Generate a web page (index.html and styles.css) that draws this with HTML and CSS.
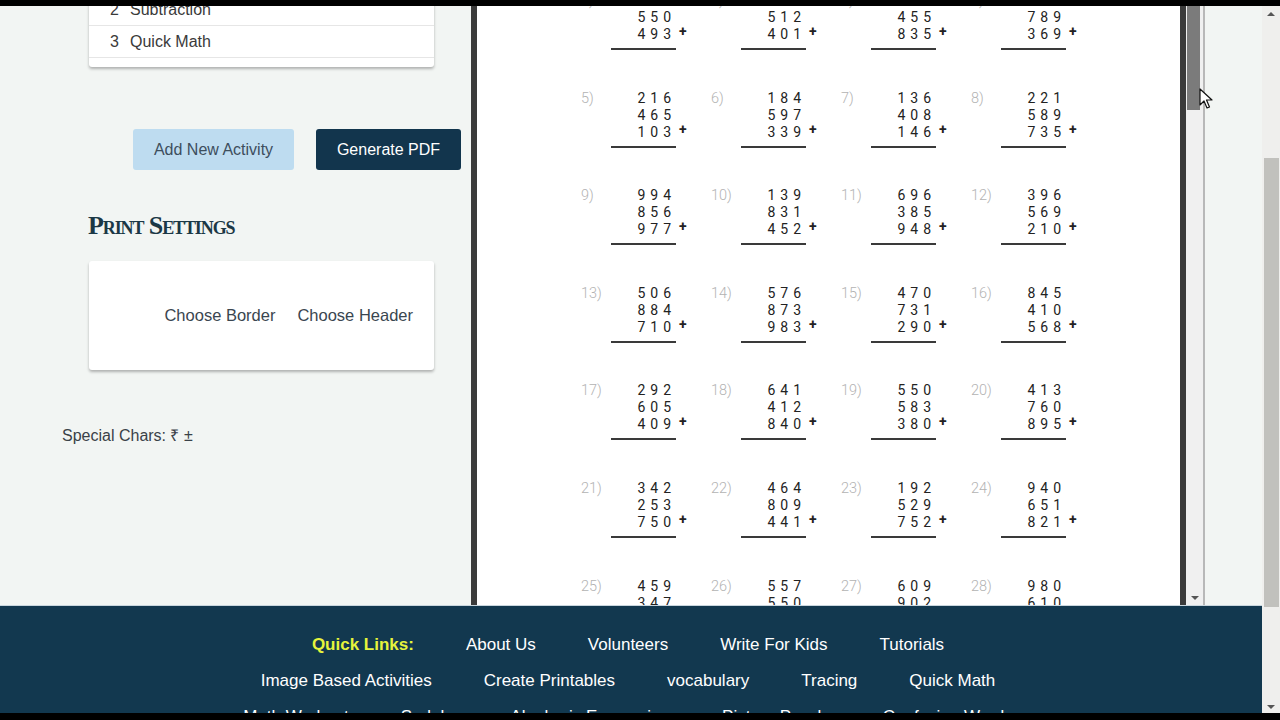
FILE: index.html
```html
<!DOCTYPE html>
<html lang="en">

<head>
    <meta charset="UTF-8">
    <meta name="viewport" content="width=device-width, initial-scale=1.0">
    <title>Worksheet Maker</title>
    <link rel="stylesheet" href="styles.css">
</head>

<body>
    <div class="screen">
        <div class="bar"></div>

        <div class="viewport">
            <div class="page">
                <div class="main">
                    <aside class="sidebar">
                        <ul class="activity-list">
                            <li><span class="num">1</span>Addition</li>
                            <li><span class="num">2</span>Subtraction</li>
                            <li><span class="num">3</span>Quick Math</li>
                        </ul>

                        <div class="actions">
                            <button class="btn btn-light">Add New Activity</button>
                            <button class="btn btn-dark">Generate PDF</button>
                        </div>

                        <h2 class="section-title">Print Settings</h2>
                        <div class="settings-card">
                            <a href="#">Choose Border</a>
                            <a href="#">Choose Header</a>
                        </div>

                        <p class="special">Special Chars: ₹ ±</p>
                    </aside>

                    <section class="preview">
                        <div class="frame">
                            <div class="sheet" id="sheet"></div>
                        </div>
                        <div class="frame-scroll">
                            <div class="frame-thumb"></div>
                            <span class="arrow-down"></span>
                        </div>
                    </section>
                </div>

                <footer class="footer">
                    <div class="links">
                        <span class="links-title">Quick Links:</span>
                        <a href="#">About Us</a>
                        <a href="#">Volunteers</a>
                        <a href="#">Write For Kids</a>
                        <a href="#">Tutorials</a>
                    </div>
                    <div class="links">
                        <a href="#">Image Based Activities</a>
                        <a href="#">Create Printables</a>
                        <a href="#">vocabulary</a>
                        <a href="#">Tracing</a>
                        <a href="#">Quick Math</a>
                    </div>
                    <div class="links">
                        <a href="#">Math Workout</a>
                        <a href="#">Sudoku</a>
                        <a href="#">Algebraic Expression</a>
                        <a href="#">Picture Puzzle</a>
                        <a href="#">Confusing Words</a>
                    </div>
                </footer>
            </div>

            <div class="page-scroll">
                <span class="arrow-up"></span>
                <div class="page-thumb"></div>
                <span class="arrow-down"></span>
            </div>
        </div>

        <div class="bar bar-bottom"></div>

        <svg class="cursor" width="14" height="22" viewBox="0 0 14 22">
            <path d="M1 1 L1 17 L5 13 L8 20 L10.5 19 L7.5 12 L13 12 Z" fill="#fff" stroke="#111" stroke-width="1.2" stroke-linejoin="round"/>
        </svg>
    </div>

    <script>
        var sheet = document.getElementById("sheet");
        var problems = [
            [318, 550, 493], [627, 512, 401], [204, 455, 835], [173, 789, 369],
            [216, 465, 103], [184, 597, 339], [136, 408, 146], [221, 589, 735],
            [994, 856, 977], [139, 831, 452], [696, 385, 948], [396, 569, 210],
            [506, 884, 710], [576, 873, 983], [470, 731, 290], [845, 410, 568],
            [292, 605, 409], [641, 412, 840], [550, 583, 380], [413, 760, 895],
            [342, 253, 750], [464, 809, 441], [192, 529, 752], [940, 651, 821],
            [459, 347, 512], [557, 550, 268], [609, 902, 174], [980, 610, 335]
        ];

        for (var i = 0; i < problems.length; i++) {
            var item = document.createElement("div");
            item.className = "problem";

            var label = document.createElement("span");
            label.className = "problem-no";
            label.textContent = (i + 1) + ")";

            var sum = document.createElement("div");
            sum.className = "sum";
            for (var j = 0; j < problems[i].length; j++) {
                var line = document.createElement("div");
                line.textContent = problems[i][j];
                sum.appendChild(line);
            }

            var op = document.createElement("span");
            op.className = "op";
            op.textContent = "+";

            item.appendChild(label);
            item.appendChild(sum);
            item.appendChild(op);
            sheet.appendChild(item);
        }
    </script>
</body>

</html>
```

FILE: styles.css
```css
body {
    margin: 0;
    background-color: #000;
    font-family: "Liberation Sans", Arial, sans-serif;
    color: #333;
}

.screen {
    position: relative;
    width: 1280px;
    height: 720px;
    display: flex;
    flex-direction: column;
    overflow: hidden;
}

.bar {
    height: 6px;
    background-color: #000;
}

.bar-bottom {
    height: 7px;
}

.viewport {
    display: flex;
    height: 707px;
}

.page {
    width: 1262px;
    display: flex;
    flex-direction: column;
    overflow: hidden;
}

.main {
    display: flex;
    height: 599px;
    background-color: #f2f5f3;
    overflow: hidden;
}

/* left column */

.sidebar {
    width: 471px;
    flex-shrink: 0;
}

.activity-list {
    list-style: none;
    margin: -44px 37px 0 89px;
    padding: 0 0 9px 0;
    background-color: #fff;
    border-radius: 3px;
    box-shadow: 0 2px 3px rgba(0, 0, 0, 0.28);
}

.activity-list li {
    height: 31px;
    line-height: 31px;
    padding-left: 21px;
    border-bottom: 1px solid #e6e6e6;
    font-size: 16px;
    color: #3a3a3a;
}

.activity-list .num {
    display: inline-block;
    width: 20px;
}

.actions {
    display: flex;
    gap: 22px;
    margin: 62px 0 0 133px;
}

.btn {
    height: 41px;
    padding: 0 18px;
    border: none;
    border-radius: 3px;
    font-family: "Liberation Sans", Arial, sans-serif;
    font-size: 16px;
    cursor: pointer;
}

.btn-light {
    width: 161px;
    background-color: #bedcf0;
    color: #3d4e5d;
}

.btn-dark {
    width: 145px;
    background-color: #12354d;
    color: #fff;
}

.section-title {
    margin: 41px 0 0 88px;
    height: 30px;
    line-height: 30px;
    font-family: "Liberation Serif", "Times New Roman", serif;
    font-variant: small-caps;
    font-size: 26px;
    font-weight: bold;
    letter-spacing: -1.1px;
    color: #1b3846;
}

.settings-card {
    display: flex;
    justify-content: flex-end;
    align-items: center;
    gap: 22px;
    height: 109px;
    margin: 20px 37px 0 89px;
    padding-right: 21px;
    background-color: #fff;
    border-radius: 3px;
    box-shadow: 0 2px 3px rgba(0, 0, 0, 0.28);
}

.settings-card a {
    font-size: 16.5px;
    color: #3a4650;
    text-decoration: none;
}

.special {
    margin: 56px 0 0 62px;
    line-height: 20px;
    font-size: 16px;
    color: #3a4148;
}

/* worksheet preview */

.preview {
    display: flex;
    width: 734px;
    flex-shrink: 0;
}

.frame {
    width: 703px;
    background-color: #fff;
    border-left: 6px solid #3b3b3b;
    border-right: 6px solid #3b3b3b;
    overflow: hidden;
}

.sheet {
    display: grid;
    grid-template-columns: repeat(4, 130px);
    grid-auto-rows: 97.6px;
    margin: -14px 0 0 104px;
}

.problem {
    display: flex;
    font-family: Roboto, "Liberation Sans", sans-serif;
}

.problem-no {
    width: 30px;
    line-height: 17px;
    font-size: 14.5px;
    font-weight: 300;
    color: #b3b3b3;
}

.sum {
    width: 65px;
    height: 51px;
    padding-bottom: 5px;
    border-bottom: 2px solid #3a3a3a;
    text-align: right;
    font-size: 14px;
    line-height: 17px;
    letter-spacing: 5px;
    color: #222;
}

.op {
    margin-left: 3px;
    padding-top: 31px;
    line-height: 17px;
    font-size: 14px;
    font-weight: bold;
    color: #222;
}

.frame-scroll {
    display: flex;
    flex-direction: column;
    justify-content: space-between;
    align-items: center;
    width: 17px;
    background-color: #f0f0f0;
    border-right: 2px solid #b8b8b8;
}

.frame-thumb {
    width: 13px;
    height: 104px;
    margin-right: 2px;
    background-color: #7b7b7b;
}

.arrow-down {
    width: 0;
    height: 0;
    margin-bottom: 5px;
    border-left: 4px solid transparent;
    border-right: 4px solid transparent;
    border-top: 4px solid #555;
}

.arrow-up {
    width: 0;
    height: 0;
    margin-top: 6px;
    border-left: 4px solid transparent;
    border-right: 4px solid transparent;
    border-bottom: 4px solid #555;
}

/* footer */

.footer {
    height: 108px;
    padding: 21px 6px 0 0;
    box-sizing: border-box;
    background-color: #12384f;
    border-top: 1px solid #c9d6de;
    overflow: hidden;
}

.links {
    display: flex;
    justify-content: center;
    gap: 52px;
    line-height: 36px;
    font-size: 17px;
    white-space: nowrap;
}

.links a {
    color: #fff;
    text-decoration: none;
}

.links-title {
    font-weight: bold;
    color: #e6f43c;
}

/* page scrollbar */

.page-scroll {
    display: flex;
    flex-direction: column;
    align-items: center;
    width: 18px;
    background-color: #efefed;
}

.page-thumb {
    width: 15px;
    height: 449px;
    margin-top: 142px;
    background-color: #c1c1bd;
}

.page-scroll .arrow-down {
    margin-top: auto;
    margin-bottom: 4px;
}

.cursor {
    position: absolute;
    left: 1199px;
    top: 88px;
}
```
